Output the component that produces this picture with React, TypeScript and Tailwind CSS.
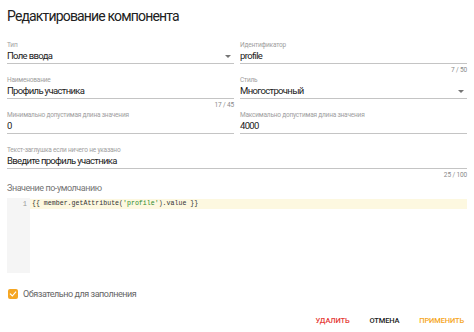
import React from 'react';

type FieldProps = {
    label: string;
    value: string;
    counter?: string;
    select?: boolean;
    className?: string;
};

const Field: React.FC<FieldProps> = ({ label, value, counter, select, className }) => (
    <div className={`flex flex-col ${className ?? ''}`}>
        <div className="h-[8px] text-[6.5px] leading-[8px] tracking-[-0.03em] text-[#9e9e9e] whitespace-nowrap">{label}</div>
        <div className="h-[15px] flex items-center justify-between border-b border-[#c4c4c4]">
            <span className="text-[9.5px] leading-[14px] tracking-[-0.07em] text-[#212121]">{value}</span>
            {select && (
                <svg width="6" height="3" viewBox="0 0 6 3" className="mr-[3px]">
                    <polygon points="0,0 6,0 3,3" fill="#757575" />
                </svg>
            )}
        </div>
        <div className="h-[12px] text-right text-[6.5px] leading-[12px] tracking-[-0.02em] text-[#8a8a8a]">{counter}</div>
    </div>
);

const App: React.FC = () => {
    return (
        <div className="w-[474px] h-[332px] bg-white px-[7px] flex flex-col font-['Roboto','Liberation_Sans',sans-serif] overflow-hidden">
            <h1 className="mt-[6px] text-[14px] leading-[20px] tracking-[-0.06em] text-[#212121]">Редактирование компонента</h1>

            {/* Form fields */}
            <div className="mt-[15px] grid grid-cols-2 gap-x-[6px]">
                <Field label="Тип" value="Поле ввода" select />
                <Field label="Идентификатор" value="profile" counter="7 / 50" />
                <Field label="Наименование" value="Профиль участника" counter="17 / 45" />
                <Field label="Стиль" value="Многострочный" select />
                <Field label="Минимально допустимая длина значения" value="0" />
                <Field label="Максимально допустимая длина значения" value="4000" />
                <Field
                    className="col-span-2"
                    label="Текст-заглушка если ничего не указано"
                    value="Введите профиль участника"
                    counter="25 / 100"
                />
            </div>

            <div className="h-[14px] text-[9px] leading-[14px] tracking-[-0.05em] text-[#757575]">Значение по-умолчанию</div>

            {/* Code editor */}
            <div className="mt-[3px] h-[75px] flex">
                <div className="w-[23px] bg-[#f5f5f5] pt-[1px] pr-[3px] text-right font-['Liberation_Mono',monospace] text-[7px] leading-[10px] text-[#999999]">
                    1
                </div>
                <div className="flex-1 pt-[1px]">
                    <div className="h-[10px] bg-[#fdf8e0] pl-[2px] font-['Liberation_Mono',monospace] text-[6.6px] leading-[10px] text-[#333333] whitespace-pre">
                        {'{{ member.getAttribute('}
                        <span className="text-[#2e8b2e]">'profile'</span>
                        {').value }}'}
                    </div>
                </div>
            </div>

            {/* Required checkbox */}
            <div className="mt-[16px] flex items-center gap-[5px] pl-[1px]">
                <div className="w-[10px] h-[10px] rounded-[2px] bg-[#f5a623] flex items-center justify-center">
                    <svg width="8" height="8" viewBox="0 0 24 24" fill="none" stroke="white" strokeWidth="3.5" strokeLinecap="square">
                        <polyline points="4,12 10,18 20,6" />
                    </svg>
                </div>
                <span className="text-[9px] leading-[10px] tracking-[-0.05em] text-[#666666]">Обязательно для заполнения</span>
            </div>

            {/* Actions */}
            <div className="mt-[14px] h-[16px] flex items-center justify-end gap-[20px] pr-[3px] text-[7.5px] font-medium tracking-[-0.02em]">
                <button className="text-[#e53935]">УДАЛИТЬ</button>
                <button className="text-[#212121]">ОТМЕНА</button>
                <button className="text-[#f5a623]">ПРИМЕНИТЬ</button>
            </div>
        </div>
    );
};

export default App;
